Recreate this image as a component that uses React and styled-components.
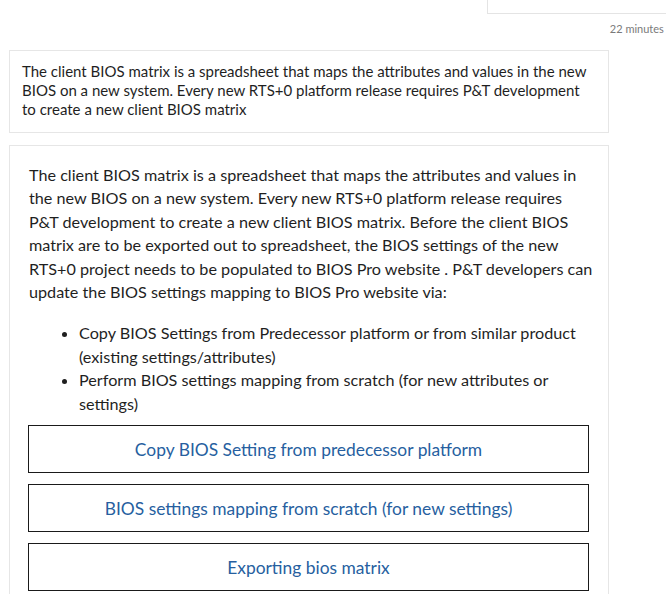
import React from 'react';
import styled, { createGlobalStyle } from 'styled-components';

const GlobalStyle = createGlobalStyle`
  html, body {
    margin: 0;
    padding: 0;
    background: #ffffff;
  }
  body {
    font-family: Lato, 'Open Sans', sans-serif;
    color: #1f1f1f;
    overflow: hidden;
  }
`;

const Page = styled.div`
  width: 666px;
  height: 594px;
  overflow: hidden;
  display: flex;
  flex-direction: column;
`;

const PrevRow = styled.div`
  display: flex;
  justify-content: flex-end;
`;

const PrevBubble = styled.div`
  width: 200px;
  height: 14px;
  margin-right: -21px;
  border: 1px solid #e4e4e4;
  border-top: none;
  box-sizing: border-box;
`;

const Stamp = styled.div`
  display: flex;
  justify-content: flex-end;
  margin-top: 8px;
  font-size: 11px;
  color: #7a7a7a;
  white-space: nowrap;
  span {
    margin-right: -18px;
  }
`;

const Card = styled.div`
  margin-left: 9px;
  width: 600px;
  box-sizing: border-box;
  border: 1px solid #e6e6e6;
  background: #fff;
  padding: ${(p) => p.$pad};
  font-size: ${(p) => p.$size};
  line-height: ${(p) => p.$lh};
  margin-top: ${(p) => p.$top};
  white-space: nowrap;
`;

const Para = styled.p`
  margin: 0;
`;

const List = styled.ul`
  margin: 18px 0 10px;
  padding-left: 50px;
`;

const Buttons = styled.div`
  display: flex;
  flex-direction: column;
  gap: 11px;
  margin-left: -1px;
  width: 561px;
`;

const ActionButton = styled.button`
  height: 48px;
  border: 1px solid #1a1a1a;
  background: #fff;
  color: #275f9f;
  font-family: Lato, 'Open Sans', sans-serif;
  font-size: 17.4px;
  cursor: pointer;
`;

export default function App() {
  return (
    <Page>
      <GlobalStyle />
      <PrevRow>
        <PrevBubble />
      </PrevRow>
      <Stamp>
        <span>22 minutes ago</span>
      </Stamp>
      <Card $pad="11px 12px 13px 12px" $size="15px" $lh="19px" $top="15px">
        The client BIOS matrix is a spreadsheet that maps the attributes and values in the new
        <br />
        BIOS on a new system. Every new RTS+0 platform release requires P&amp;T development
        <br />
        to create a new client BIOS matrix
      </Card>
      <Card $pad="17px 19px 20px 19px" $size="16.2px" $lh="23.4px" $top="12px">
        <Para>
          The client BIOS matrix is a spreadsheet that maps the attributes and values in
          <br />
          the new BIOS on a new system. Every new RTS+0 platform release requires
          <br />
          P&amp;T development to create a new client BIOS matrix. Before the client BIOS
          <br />
          matrix are to be exported out to spreadsheet, the BIOS settings of the new
          <br />
          RTS+0 project needs to be populated to BIOS Pro website . P&amp;T developers can
          <br />
          update the BIOS settings mapping to BIOS Pro website via:
        </Para>
        <List>
          <li>
            Copy BIOS Settings from Predecessor platform or from similar product
            <br />
            (existing settings/attributes)
          </li>
          <li>
            Perform BIOS settings mapping from scratch (for new attributes or
            <br />
            settings)
          </li>
        </List>
        <Buttons>
          <ActionButton>Copy BIOS Setting from predecessor platform</ActionButton>
          <ActionButton>BIOS settings mapping from scratch (for new settings)</ActionButton>
          <ActionButton>Exporting bios matrix</ActionButton>
        </Buttons>
      </Card>
    </Page>
  );
}
